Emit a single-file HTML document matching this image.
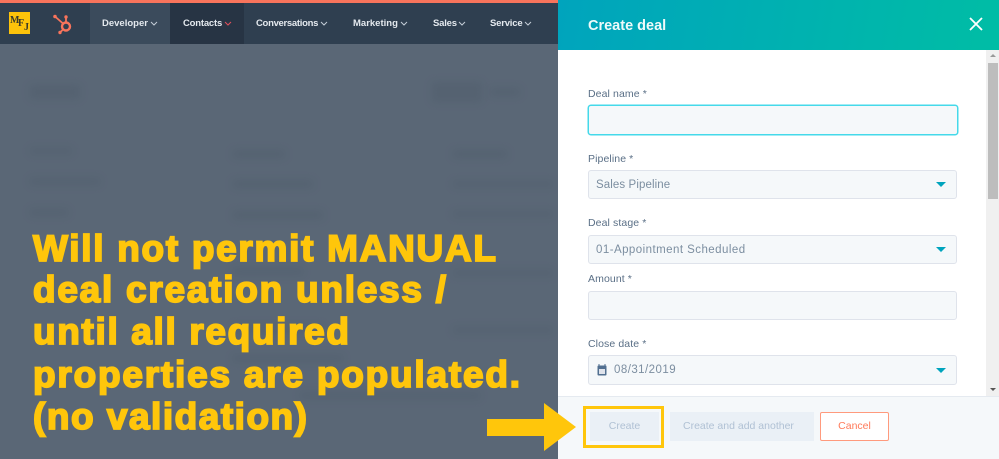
<!DOCTYPE html>
<html><head><meta charset="utf-8"><style>
*{box-sizing:border-box;margin:0;padding:0}
html,body{width:999px;height:459px;overflow:hidden;background:#5a6776;font-family:"Liberation Sans",sans-serif}
.a{position:absolute}
.nav{font-weight:bold;font-size:9.5px;color:#e4e9ee;top:18px;white-space:nowrap;letter-spacing:-.2px}
.lb{position:absolute;left:588px;font-size:10.5px;color:#5a6f86;letter-spacing:.1px;white-space:nowrap}
.in{position:absolute;left:588px;width:369px;height:29px;background:#f5f8fa;border:1px solid #dfe3eb;border-radius:3px;font-size:11.5px;color:#7c8ea0;letter-spacing:.45px;line-height:29px;padding-left:7px;white-space:nowrap}
.car{position:absolute;left:347px;top:11px;width:0;height:0;border-left:5px solid transparent;border-right:5px solid transparent;border-top:5px solid #00a4bd}
.b{position:absolute;background:#4d5a69;filter:blur(4px);opacity:.38}
</style></head><body>
<div class="a" style="left:0;top:0;width:558px;height:459px;background:#5a6776;overflow:hidden">
<div class="b" style="left:30px;top:85px;width:50px;height:14px"></div>
<div class="b" style="left:432px;top:82px;width:50px;height:20px"></div>
<div class="b" style="left:490px;top:88px;width:30px;height:8px"></div>
<div class="b" style="left:30px;top:148px;width:42px;height:6px"></div>
<div class="b" style="left:233px;top:150px;width:52px;height:8px"></div>
<div class="b" style="left:453px;top:150px;width:54px;height:8px"></div>
<div class="b" style="left:30px;top:178px;width:70px;height:7px"></div>
<div class="b" style="left:233px;top:180px;width:80px;height:8px"></div>
<div class="b" style="left:453px;top:181px;width:100px;height:6px"></div>
<div class="b" style="left:30px;top:209px;width:38px;height:7px"></div>
<div class="b" style="left:233px;top:211px;width:90px;height:8px"></div>
<div class="b" style="left:453px;top:211px;width:100px;height:6px"></div>
<div class="b" style="left:233px;top:268px;width:70px;height:7px"></div>
<div class="b" style="left:453px;top:270px;width:100px;height:6px"></div>
<div class="b" style="left:233px;top:325px;width:90px;height:7px"></div>
<div class="b" style="left:453px;top:327px;width:100px;height:6px"></div>
<div class="b" style="left:233px;top:355px;width:110px;height:7px"></div>
<div class="b" style="left:300px;top:392px;width:180px;height:7px"></div>
</div>
<div class="a" style="left:0;top:3px;width:558px;height:41px;background:#2f3f50"></div>
<div class="a" style="left:0;top:0;width:558px;height:3px;background:#f8745c"></div>
<div class="a" style="left:90px;top:3px;width:80px;height:41px;background:#3b4b5c"></div>
<div class="a" style="left:170px;top:3px;width:74px;height:41px;background:#273444"></div>
<svg class="a" style="left:9px;top:12px" width="21" height="22" font-family="Liberation Serif" font-weight="bold" fill="#3a3a2a"><rect width="21" height="22" fill="#fdc30a"/><text x="1" y="11" font-size="10">M</text><text x="9" y="14" font-size="10">F</text><text x="15" y="18" font-size="10">J</text></svg>
<svg class="a" style="left:52px;top:14px" width="22" height="24" viewBox="0 0 22 24" fill="none" stroke="#f8745c" stroke-width="1.800">
<circle cx="14" cy="12.5" r="4" stroke-width="2.400"/><path d="M3 2.500l8 7M14 3v5M11 15.500l-3 3"/>
<circle cx="3" cy="2.500" r="1.800" fill="#f8745c" stroke="none"/><circle cx="14" cy="3" r="1.700" fill="#f8745c" stroke="none"/><circle cx="8" cy="18.500" r="1.700" fill="#f8745c" stroke="none"/></svg>
<div class="a nav" style="left:102px;letter-spacing:0">Developer</div>
<div class="a nav" style="left:183px">Contacts</div>
<div class="a nav" style="left:256px;letter-spacing:-.3px">Conversations</div>
<div class="a nav" style="left:353px;letter-spacing:0">Marketing</div>
<div class="a nav" style="left:433px">Sales</div>
<div class="a nav" style="left:490px">Service</div>
<svg class="a" style="left:0;top:20px" width="558" height="8" fill="none" stroke="#c3ccd6" stroke-width="1">
<path d="M151 2l3 3 3-3M321 2l3 3 3-3M401 2l3 3 3-3M459 2l3 3 3-3M525 2l3 3 3-3"/><path d="M225 2l3 3 3-3" stroke="#e0505c"/></svg>

<svg class="a" style="left:0;top:225px;overflow:visible" width="558" height="234" font-family="Liberation Sans" font-weight="bold" font-size="37" fill="#ffc60b" stroke="#ffc60b" stroke-width="1.800">
<text x="33" y="36" textLength="463" lengthAdjust="spacing">Will not permit MANUAL</text>
<text x="33" y="77" textLength="413" lengthAdjust="spacing">deal creation unless /</text>
<text x="33" y="119" textLength="316" lengthAdjust="spacing">until all required</text>
<text x="33" y="162" textLength="487" lengthAdjust="spacing">properties are populated.</text>
<text x="33" y="204" textLength="274" lengthAdjust="spacing">(no validation)</text>
</svg>

<div class="a" style="left:558px;top:0;width:441px;height:459px;background:#fff"></div>
<div class="a" style="left:558px;top:0;width:441px;height:50px;background:linear-gradient(100deg,#00a4bd,#00bda5)"></div>
<div class="a" style="left:588px;top:18px;font-size:14.500px;font-weight:bold;color:#eefafa">Create deal</div>
<svg class="a" style="left:968px;top:16px" width="16" height="16" fill="none" stroke="#fff" stroke-width="1.800"><path d="M2 2l12 12M14 2L2 14"/></svg>

<div class="a" style="left:986px;top:50px;width:13px;height:347px;background:#f0f0f0"></div>
<div class="a" style="left:988px;top:63px;width:10px;height:136px;background:#bdbdbd"></div>
<div class="a" style="left:990px;top:54px;width:0;height:0;border-left:3px solid transparent;border-right:3px solid transparent;border-bottom:3px solid #999"></div>
<div class="a" style="left:990px;top:388px;width:0;height:0;border-left:3px solid transparent;border-right:3px solid transparent;border-top:3px solid #555"></div>

<div class="lb" style="top:88px">Deal name *</div>
<div class="in" style="top:105px;width:370px;height:30px;border:1px solid #45d9ea;box-shadow:0 0 0 .5px #45d9ea"></div>
<div class="lb" style="top:153px">Pipeline *</div>
<div class="in" style="top:170px;letter-spacing:.1px">Sales Pipeline<div class="car"></div></div>
<div class="lb" style="top:217px">Deal stage *</div>
<div class="in" style="top:235px">01-Appointment Scheduled<div class="car"></div></div>
<div class="lb" style="top:273px">Amount *</div>
<div class="in" style="top:291px"></div>
<div class="lb" style="top:338px">Close date *</div>
<div class="in" style="top:355px;height:30px;line-height:29px;padding-left:25px">08/31/2019<div class="car" style="top:12px"></div>
<svg class="a" style="left:8px;top:8px" width="10" height="12"><rect x="0.500" y="1.500" width="9" height="10" rx="1" fill="#516f90"/><rect x="2" y="5" width="6" height="5" fill="#dfe3eb"/><path d="M2 0v3M8 0v3" stroke="#516f90" stroke-width="1"/></svg></div>

<div class="a" style="left:558px;top:396px;width:441px;height:63px;background:#f5f8fa;border-top:1px solid #e5eaf0"></div>
<div class="a" style="left:590px;top:412px;width:69px;height:29px;background:#eaf0f6;font-size:10.500px;color:#b0c1d4;text-align:center;line-height:29px">Create</div>
<div class="a" style="left:670px;top:412px;width:144px;height:29px;background:#eaf0f6;font-size:10.500px;color:#b0c1d4;line-height:29px;padding-left:13px">Create and add another</div>
<div class="a" style="left:820px;top:412px;width:69px;height:29px;background:#fff;border:1px solid #ff9a7d;font-size:10.500px;color:#ff7a59;text-align:center;line-height:27px;border-radius:2px">Cancel</div>
<div class="a" style="left:583px;top:406px;width:81px;height:42px;border:3px solid #ffc60b"></div>
<svg class="a" style="left:480px;top:395px" width="100" height="64"><path d="M7 24H64V8L96 32L64 56V41H7Z" fill="#ffc60b"/></svg>
</body></html>
